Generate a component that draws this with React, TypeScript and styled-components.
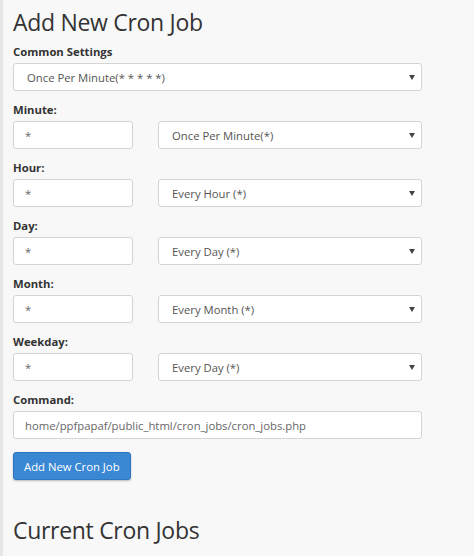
import React from 'react'
import styled, { createGlobalStyle } from 'styled-components'

const GlobalStyle = createGlobalStyle`
  html, body {
    margin: 0;
    padding: 0;
    background: #f8f8f8;
  }

  body {
    font-family: 'Open Sans', 'Liberation Sans', sans-serif;
    color: #333;
  }
`

interface Field {
  label: string
  value: string
  option: string
}

const fields: Field[] = [
  { label: 'Minute:', value: '*', option: 'Once Per Minute(*)' },
  { label: 'Hour:', value: '*', option: 'Every Hour (*)' },
  { label: 'Day:', value: '*', option: 'Every Day (*)' },
  { label: 'Month:', value: '*', option: 'Every Month (*)' },
  { label: 'Weekday:', value: '*', option: 'Every Day (*)' },
]

const Select = ({ value }: { value: string }) => (
  <SelectWrap>
    <SelectBox defaultValue={value}>
      <option>{value}</option>
    </SelectBox>
    <Arrow />
  </SelectWrap>
)

const App = () => {
  return (
    <Page>
      <GlobalStyle />
      <Title>Add New Cron Job</Title>

      <Group>
        <Label>Common Settings</Label>
        <Select value="Once Per Minute(* * * * *)" />
      </Group>

      {fields.map((f) => (
        <Group key={f.label}>
          <Label>{f.label}</Label>
          <Row>
            <Input defaultValue={f.value} />
            <Select value={f.option} />
          </Row>
        </Group>
      ))}

      <Group>
        <Label>Command:</Label>
        <Input
          $wide
          defaultValue="home/ppfpapaf/public_html/cron_jobs/cron_jobs.php"
        />
      </Group>

      <Button type="button">Add New Cron Job</Button>

      <Title $second>Current Cron Jobs</Title>
    </Page>
  )
}

export default App

const Page = styled.div`
  box-sizing: border-box;
  width: 463px;
  min-height: 556px;
  padding: 6px 41px 0 10px;
  border-left: 3px solid #e6e6e6;
  background: #f8f8f8;
  overflow: hidden;
`

const Title = styled.h1<{ $second?: boolean }>`
  margin: ${(p) => (p.$second ? '34px 0 0' : '0')};
  font-size: 23px;
  font-weight: 400;
  letter-spacing: -0.3px;
  line-height: 32px;
  color: #333;
  white-space: nowrap;
`

const Group = styled.div`
  display: flex;
  flex-direction: column;
  margin-top: 2px;

  & + & {
    margin-top: 7px;
  }
`

const Label = styled.label`
  font-size: 11.3px;
  font-weight: 700;
  line-height: 23px;
  color: #333;
`

const Row = styled.div`
  display: flex;
  gap: 25px;
`

const Input = styled.input<{ $wide?: boolean }>`
  box-sizing: border-box;
  width: ${(p) => (p.$wide ? '409px' : '120px')};
  height: 28px;
  padding: 0 11px;
  border: 1px solid #d4d4d4;
  border-radius: 3px;
  background: #fff;
  font-family: inherit;
  font-size: 11.3px;
  color: #666;
  outline: none;
`

const SelectWrap = styled.div`
  position: relative;
  flex: 1;
  display: flex;
`

const SelectBox = styled.select`
  box-sizing: border-box;
  width: 100%;
  height: 28px;
  padding: 0 24px 0 13px;
  border: 1px solid #d4d4d4;
  border-radius: 3px;
  background: #fff;
  font-family: inherit;
  font-size: 11.3px;
  color: #555;
  appearance: none;
  outline: none;
`

const Arrow = styled.span`
  position: absolute;
  right: 7px;
  top: 12px;
  width: 0;
  height: 0;
  border-left: 3px solid transparent;
  border-right: 3px solid transparent;
  border-top: 5px solid #444;
  pointer-events: none;
`

const Button = styled.button`
  align-self: flex-start;
  box-sizing: border-box;
  height: 28px;
  margin-top: 13px;
  padding: 0 10px;
  border: 1px solid #2f78c0;
  border-radius: 3px;
  background: #3a87d4;
  box-shadow: 0 1px 2px rgba(0, 0, 0, 0.25);
  font-family: inherit;
  font-size: 11.3px;
  color: #fff;
  cursor: pointer;
`
